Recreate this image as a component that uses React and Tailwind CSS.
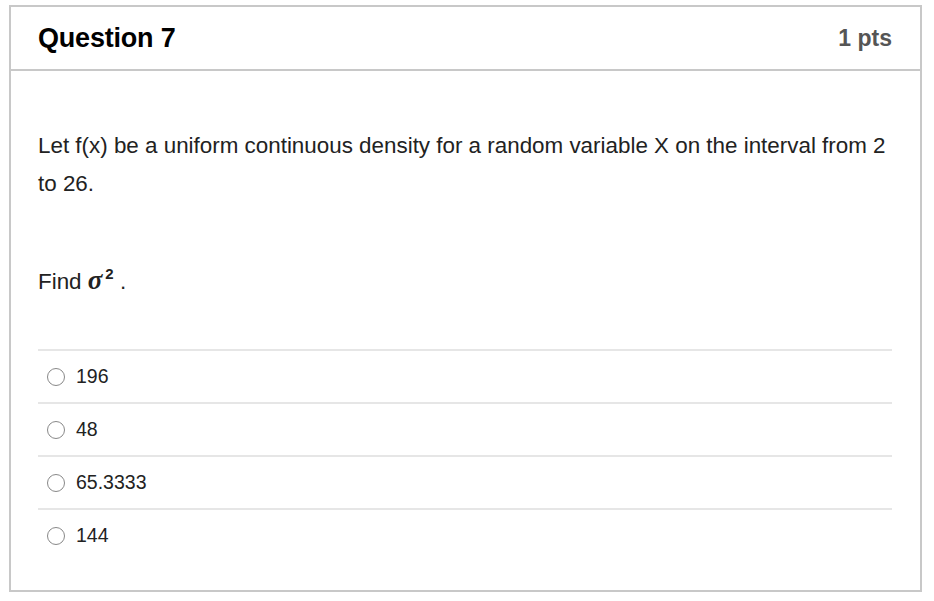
import React from "react";

const answers = ["196", "48", "65.3333", "144"];

const App = () => {
  return (
    <div className="w-[934px] h-[601px] bg-white pt-[5px] pl-[9px]" style={{ fontFamily: '"Liberation Sans", Arial, sans-serif' }}>
      <div className="w-[913px] h-[587px] border-2 border-[#c8c8c8] flex flex-col">
        <div className="h-[64px] flex items-center justify-between pl-[27px] pr-[28px] border-b-2 border-[#c8c8c8] shrink-0">
          <h2 className="text-[27px] font-bold text-black tracking-[-0.2px]">Question 7</h2>
          <span className="text-[23px] font-bold text-[#555]">1 pts</span>
        </div>
        <div className="pl-[27px] pr-[28px] pt-[56px] text-[#222]">
          <p className="text-[22.4px] leading-[38px] whitespace-nowrap">
            Let f(x) be a uniform continuous density for a random variable X on the interval from 2
            <br />
            to 26.
          </p>
          <p className="text-[22.4px] leading-[38px] h-[38px] mt-[60px]">
            Find{" "}
            <span className="font-bold italic text-[27px] leading-none" style={{ fontFamily: '"Liberation Serif", serif' }}>
              σ
              <sup className="text-[15px] not-italic ml-[3px] -top-[0.7em]" style={{ fontFamily: '"Liberation Sans", sans-serif' }}>2</sup>
            </span>{" "}
            .
          </p>
          <div className="mt-[48px]">
            {answers.map((a) => (
              <div key={a} className="h-[53px] border-t-2 border-[#e6e6e6] flex items-center pl-[9px]">
                <span className="w-[18px] h-[18px] rounded-full border border-[#888] bg-white mr-[11px]" />
                <span className="text-[19.5px] text-[#222]">{a}</span>
              </div>
            ))}
          </div>
        </div>
      </div>
    </div>
  );
};

export default App;
